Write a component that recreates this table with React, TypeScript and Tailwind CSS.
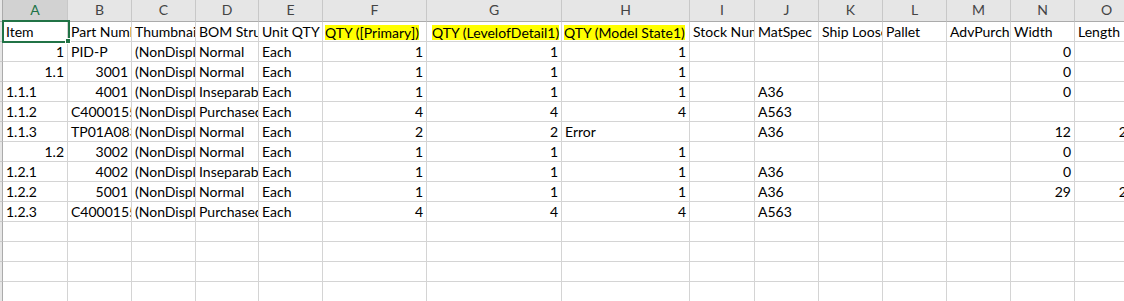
import React from "react";

const cols = ["A", "B", "C", "D", "E", "F", "G", "H", "I", "J", "K", "L", "M", "N", "O"];

const headerRow = [
  "Item",
  "Part Number",
  "Thumbnail",
  "BOM Structure",
  "Unit QTY",
  "QTY ([Primary])",
  "QTY (LevelofDetail1)",
  "QTY (Model State1)",
  "Stock Number",
  "MatSpec",
  "Ship Loose",
  "Pallet",
  "AdvPurch",
  "Width",
  "Length",
];

const rows: string[][] = [
  ["1", "PID-P", "(NonDisplayable)", "Normal", "Each", "1", "1", "1", "", "", "", "", "", "0", ""],
  ["1.1", "3001", "(NonDisplayable)", "Normal", "Each", "1", "1", "1", "", "", "", "", "", "0", ""],
  ["1.1.1", "4001", "(NonDisplayable)", "Inseparable", "Each", "1", "1", "1", "", "A36", "", "", "", "0", ""],
  ["1.1.2", "C400015530", "(NonDisplayable)", "Purchased", "Each", "4", "4", "4", "", "A563", "", "", "", "", ""],
  ["1.1.3", "TP01A0831", "(NonDisplayable)", "Normal", "Each", "2", "2", "Error", "", "A36", "", "", "", "12", "24"],
  ["1.2", "3002", "(NonDisplayable)", "Normal", "Each", "1", "1", "1", "", "", "", "", "", "0", ""],
  ["1.2.1", "4002", "(NonDisplayable)", "Inseparable", "Each", "1", "1", "1", "", "A36", "", "", "", "0", ""],
  ["1.2.2", "5001", "(NonDisplayable)", "Normal", "Each", "1", "1", "1", "", "A36", "", "", "", "29", "24"],
  ["1.2.3", "C400015530", "(NonDisplayable)", "Purchased", "Each", "4", "4", "4", "", "A563", "", "", "", "", ""],
];

const emptyRows = 4;
const isNumber = (v: string) => /^\d+(\.\d+)?$/.test(v);

const Cell = ({ value }: { value: string }) => (
  <div
    className={`h-[20px] border-r border-b border-[#d4d4d4] overflow-hidden whitespace-nowrap px-[3px] leading-[19px] ${
      isNumber(value) ? "text-right" : "text-left"
    }`}
  >
    {value}
  </div>
);

const RowStub = () => <div className="h-[20px] bg-[#e6e6e6] border-r border-b border-r-[#ababab] border-b-[#c8c8c8]" />;

export default function App() {
  return (
    <div className="relative w-[1124px] h-[301px] overflow-hidden bg-white text-black text-[14px] font-['Lato',sans-serif]">
      <div className="grid w-[1139px] grid-cols-[3px_65px_64px_64px_63px_64px_104px_135px_128px_65px_64px_64px_64px_64px_64px_64px]">
        {/* column headers */}
        <div className="h-[22px] bg-[#e6e6e6] border-r border-b border-[#ababab]" />
        {cols.map(c => (
          <div
            key={c}
            className={`h-[22px] border-r border-b border-r-[#c8c8c8] border-b-[#ababab] text-center leading-[20px] ${
              c === "A" ? "bg-[#d2d2d2] text-[#217346]" : "bg-[#e6e6e6] text-[#444444]"
            }`}
          >
            {c}
          </div>
        ))}

        {/* first row: field names */}
        <RowStub />
        {headerRow.map((h, i) => (
          <div
            key={h}
            className="h-[20px] border-r border-b border-[#d4d4d4] overflow-hidden whitespace-nowrap px-[2px] leading-[19px]"
          >
            {i >= 5 && i <= 7 ? (
              <span
                className={`inline-block h-[15px] mt-[3px] leading-[15px] align-top bg-[#ffff00] ${
                  i === 6 ? "ml-[3px]" : ""
                }`}
              >
                {h}
              </span>
            ) : (
              <span className="pl-[1px]">{h}</span>
            )}
          </div>
        ))}

        {rows.map((r, ri) => (
          <React.Fragment key={ri}>
            <RowStub />
            {r.map((v, ci) => (
              <Cell key={ci} value={v} />
            ))}
          </React.Fragment>
        ))}

        {Array.from({ length: emptyRows }).map((_, ri) => (
          <React.Fragment key={"e" + ri}>
            <RowStub />
            {cols.map(c => (
              <Cell key={c} value="" />
            ))}
          </React.Fragment>
        ))}
      </div>

      {/* active cell A1 */}
      <div className="absolute left-[2px] top-[20px] w-[68px] h-[23px] border-2 border-[#217346]" />
      <div className="absolute left-[65px] top-[38px] w-[6px] h-[6px] bg-[#217346] border border-white" />
    </div>
  );
}
